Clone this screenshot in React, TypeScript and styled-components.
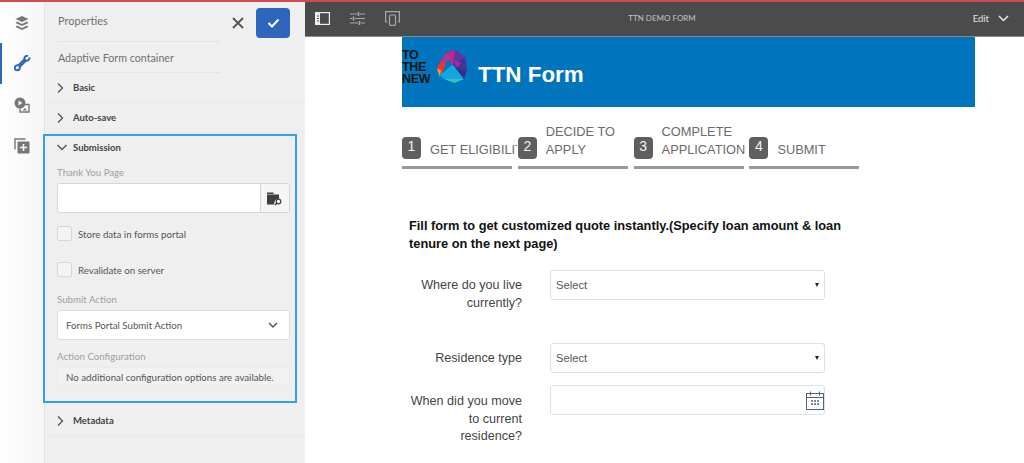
import React from 'react';
import styled, { createGlobalStyle } from 'styled-components';

const GlobalStyle = createGlobalStyle`
  html, body { margin: 0; padding: 0; height: 100%; overflow: hidden; background: #fff; }
  #root { height: 100%; }
  * { box-sizing: border-box; }
`;

const UI_FONT = `Lato, "Open Sans", sans-serif`;
const FORM_FONT = `"Liberation Sans", Arial, sans-serif`;

const steps = [
  { n: 1, label: 'GET ELIGIBILITY' },
  { n: 2, label: 'DECIDE TO APPLY' },
  { n: 3, label: 'COMPLETE APPLICATION' },
  { n: 4, label: 'SUBMIT' },
];

const LayersIcon = () => (
  <svg width="16" height="16" viewBox="0 0 16 16" fill="#777">
    <path d="M8 1l6.5 3L8 7 1.5 4z" />
    <path d="M3 6.6L8 9l5-2.4L14.5 8 8 11 1.5 8z" />
    <path d="M3 10.6L8 13l5-2.4 1.5 1.4L8 15l-6.500-3z" />
  </svg>
);

const WrenchIcon = () => (
  <svg width="17" height="17" viewBox="0 0 17 17" fill="none" stroke="#2f66bd" strokeWidth="2" strokeLinecap="round">
    <path d="M15.500 3.200c-.3 1.800-1.800 2.800-3.400 2.300L5.800 11.700c.5 1.700-.6 3.600-2.500 3.600-1.500 0-2.500-1.100-2.500-2.500 0-1.800 1.700-2.900 3.400-2.400l6.300-6.300C10 2.300 11.400.8 13.200.8" />
  </svg>
);

const AssetsIcon = () => (
  <svg width="16" height="16" viewBox="0 0 16 16">
    <circle cx="6" cy="6" r="5.500" fill="#777" />
    <path d="M4.500 3.500L8.500 6l-4 2.500z" fill="#f5f5f5" />
    <path d="M9 7.500h6v7.500H6v-3.500" fill="none" stroke="#777" strokeWidth="1.400" />
    <path d="M8.500 13.500l2.500-2.500 2 2.500z" fill="#777" />
  </svg>
);

const AddIcon = () => (
  <svg width="16" height="16" viewBox="0 0 16 16">
    <path d="M1 11.500V1h10.500" fill="none" stroke="#777" strokeWidth="1.400" />
    <rect x="3.500" y="3.500" width="12" height="12" rx="1" fill="#777" />
    <path d="M9.500 6v7M6 9.500h7" stroke="#f5f5f5" strokeWidth="1.600" />
  </svg>
);

const Chevron = ({ open }: { open?: boolean }) => (
  <svg width="10" height="10" viewBox="0 0 10 10" fill="none" stroke="#555" strokeWidth="1.300">
    <path d={open ? 'M.5 3l4.500 4.500L9.500 3' : 'M3 .5L7.500 5 3 9.500'} />
  </svg>
);

const FolderSearchIcon = () => (
  <svg width="16" height="15" viewBox="0 0 16 15">
    <path d="M0 1.500h6.500V3H0zM0 3.500h12V8a4 4 0 0 0-4.500 5.500H0z" fill="#3f3f3f" />
    <circle cx="11.500" cy="10.500" r="2.300" fill="none" stroke="#3f3f3f" strokeWidth="1.200" />
    <path d="M9.800 12.300l-1.800 1.800" stroke="#3f3f3f" strokeWidth="1.400" />
  </svg>
);

const SidePanelIcon = () => (
  <svg width="15" height="13" viewBox="0 0 15 13">
    <rect x=".6" y=".6" width="13.800" height="11.800" fill="none" stroke="#eee" strokeWidth="1.200" />
    <rect x="1" y="1" width="4" height="11" fill="#eee" />
    <path d="M2 4h2M2 6.500h2M2 9h2" stroke="#4b4b4b" />
  </svg>
);

const SlidersIcon = () => (
  <svg width="15" height="13" viewBox="0 0 15 13" stroke="#a8a8a8" strokeWidth="1.200">
    <path d="M0 2h7M10 2h5M0 6.500h2M5 6.500h10M0 11h8M11 11h4" />
    <path d="M8.500 0v4M3.500 4.500v4M9.500 9v4" strokeWidth="1.600" />
  </svg>
);

const DeviceIcon = () => (
  <svg width="15" height="15" viewBox="0 0 15 15" fill="none" stroke="#a8a8a8" strokeWidth="1.200">
    <path d="M2.500 11H.6V.6h13.800V11H13" />
    <rect x="4.500" y="4" width="6" height="10.400" rx="1" />
  </svg>
);

const CalendarIcon = () => (
  <svg width="18" height="19" viewBox="0 0 18 19" fill="none" stroke="#4d6480" strokeWidth="1">
    <rect x=".5" y="2.500" width="17" height="16" />
    <path d="M.5 6.500h17M4.500 .5v4M13.500 .5v4" />
    <path d="M5 10h2M8 10h2M11 10h2M5 13h2M8 13h2M11 13h2" strokeWidth="1.500" />
  </svg>
);

const GemLogo = () => (
  <svg width="30" height="33" viewBox="0 0 31 34">
    <path d="M9 3L19 0l5 4-8 13z" fill="#c2258c" />
    <path d="M9 3L16 9 2 14z" fill="#b0339f" />
    <path d="M2 14l8-3-5 14-5-6z" fill="#ee3338" />
    <path d="M0 19l4 2-1 7z" fill="#f7a11a" />
    <path d="M16 15l12 15-21 0-4-4z" fill="#12a8df" />
    <path d="M7 30l21 0-10 4z" fill="#2ec4c0" />
    <path d="M19 0l10 7-13 9z" fill="#5b3aa0" />
    <path d="M29 7l2 13-15-4z" fill="#4a3296" />
    <path d="M31 20l-3 10-10-13z" fill="#3b2c8c" />
    <path d="M17 9l8 5-5 4z" fill="#a32c9c" />
  </svg>
);

const App = () => {
  return (
    <>
      <GlobalStyle />
      <Page>
        <TopLine />
        <Workspace>
          <Rail>
            <RailItem><LayersIcon /></RailItem>
            <RailItem active><WrenchIcon /></RailItem>
            <RailItem><AssetsIcon /></RailItem>
            <RailItem><AddIcon /></RailItem>
          </Rail>

          <Panel>
            <PanelHeader>
              <PanelTitle>Properties</PanelTitle>
              <CloseButton>
                <svg width="12" height="12" viewBox="0 0 12 12" stroke="#555" strokeWidth="1.800">
                  <path d="M1 1l10 10M11 1L1 11" />
                </svg>
              </CloseButton>
              <ConfirmButton>
                <svg width="13" height="10" viewBox="0 0 13 10" fill="none" stroke="#fff" strokeWidth="2">
                  <path d="M1.500 5l3.500 3.500 6.500-7" />
                </svg>
              </ConfirmButton>
            </PanelHeader>
            <PanelSubtitle>Adaptive Form container</PanelSubtitle>

            <AccordionRow><Chevron /><span>Basic</span></AccordionRow>
            <AccordionRow><Chevron /><span>Auto-save</span></AccordionRow>

            <SelectedSection>
              <SectionHead><Chevron open /><span>Submission</span></SectionHead>
              <FieldLabel>Thank You Page</FieldLabel>
              <PathField>
                <PathInput />
                <PathButton><FolderSearchIcon /></PathButton>
              </PathField>
              <CheckRow><CheckBox /><span>Store data in forms portal</span></CheckRow>
              <CheckRow second><CheckBox /><span>Revalidate on server</span></CheckRow>
              <FieldLabel spaced>Submit Action</FieldLabel>
              <ActionSelect>
                <span>Forms Portal Submit Action</span>
                <svg width="10" height="7" viewBox="0 0 10 7" fill="none" stroke="#555" strokeWidth="1.500">
                  <path d="M1 1l4 4 4-4" />
                </svg>
              </ActionSelect>
              <FieldLabel config>Action Configuration</FieldLabel>
              <ConfigNote>No additional configuration options are available.</ConfigNote>
            </SelectedSection>

            <AccordionRow metadata><Chevron /><span>Metadata</span></AccordionRow>
          </Panel>

          <Main>
            <Toolbar>
              <ToolbarIcons>
                <SidePanelIcon />
                <SlidersIcon />
                <DeviceIcon />
              </ToolbarIcons>
              <ToolbarTitle>TTN DEMO FORM</ToolbarTitle>
              <EditMenu>
                <span>Edit</span>
                <svg width="11" height="7" viewBox="0 0 11 7" fill="none" stroke="#e8e8e8" strokeWidth="1.500">
                  <path d="M1 1l4.500 4.500L10 1" />
                </svg>
              </EditMenu>
            </Toolbar>

            <Canvas>
              <Banner>
                <Wordmark>TO<br />THE<br />NEW</Wordmark>
                <GemLogo />
                <BannerTitle>TTN Form</BannerTitle>
              </Banner>

              <Steps>
                {steps.map((s) => (
                  <Step key={s.n}>
                    <StepNumber>{s.n}</StepNumber>
                    <StepLabel nowrap={s.n === 1}>{s.label}</StepLabel>
                  </Step>
                ))}
              </Steps>

              <FormIntro>
                Fill form to get customized quote instantly.(Specify loan amount &amp; loan tenure on the next page)
              </FormIntro>

              <FormRow height={73}>
                <RowLabel>Where do you live currently?</RowLabel>
                <SelectBox>Select<SelectCaret /></SelectBox>
              </FormRow>
              <FormRow height={42}>
                <RowLabel>Residence type</RowLabel>
                <SelectBox>Select<SelectCaret /></SelectBox>
              </FormRow>
              <FormRow height={60}>
                <RowLabel low>When did you move to current residence?</RowLabel>
                <SelectBox><DateIcon><CalendarIcon /></DateIcon></SelectBox>
              </FormRow>
            </Canvas>
          </Main>
        </Workspace>
      </Page>
    </>
  );
};

export default App;

const Page = styled.div`
  display: flex;
  flex-direction: column;
  height: 463px;
  width: 1024px;
  overflow: hidden;
  font-family: ${UI_FONT};
`;

const TopLine = styled.div`
  flex: none;
  height: 2px;
  background: #cf4a52;
`;

const Workspace = styled.div`
  flex: 1;
  display: flex;
  min-height: 0;
`;

const Rail = styled.nav`
  flex: none;
  width: 45px;
  background: linear-gradient(90deg, #fff, #f6f6f6);
  border-right: 1px solid #e2e2e2;
`;

const RailItem = styled.div<{ active?: boolean }>`
  display: flex;
  align-items: center;
  justify-content: center;
  height: 41px;
  box-shadow: ${({ active }) => (active ? 'inset 2px 0 0 #2f66bd' : 'none')};
`;

const Panel = styled.aside`
  flex: none;
  width: 260px;
  background: #efefef;
`;

const PanelHeader = styled.div`
  display: flex;
  align-items: center;
  height: 39px;
  padding: 0 15px 0 13px;
`;

const PanelTitle = styled.div`
  width: 162px;
  height: 40px;
  line-height: 38px;
  font-size: 11px;
  color: #707070;
  border-bottom: 1px solid #e4e4e4;
`;

const CloseButton = styled.div`
  display: flex;
  width: 12px;
  margin: 2px 0 0 12px;
`;

const ConfirmButton = styled.div`
  display: flex;
  align-items: center;
  justify-content: center;
  width: 34px;
  height: 30px;
  margin: 3px 0 0 12px;
  background: #2f66bd;
  border-radius: 4px;
`;

const PanelSubtitle = styled.div`
  width: 162px;
  height: 32px;
  margin-left: 13px;
  line-height: 33px;
  font-size: 10.700px;
  color: #707070;
  border-bottom: 1px solid #e4e4e4;
`;

const AccordionRow = styled.div<{ metadata?: boolean }>`
  display: flex;
  align-items: center;
  gap: 8px;
  height: 30px;
  margin-top: ${({ metadata }) => (metadata ? '3px' : '0')};
  padding-left: 10px;
  font-size: 9.500px;
  font-weight: 700;
  color: #444;
  border-bottom: 1px solid #e8e8e8;
`;

const SelectedSection = styled.section`
  position: relative;
  width: 254px;
  height: 269px;
  margin: 1px 0 0 -2px;
  padding: 0 6px 0 12px;
  border: 2px solid #2f9ff0;
  background: #efefef;
`;

const SectionHead = styled.div`
  display: flex;
  align-items: center;
  gap: 6px;
  height: 22px;
  font-size: 9.500px;
  font-weight: 700;
  color: #444;
`;

const FieldLabel = styled.div<{ spaced?: boolean; config?: boolean }>`
  height: 14px;
  margin-top: ${({ spaced, config }) => (spaced ? '15px' : config ? '9px' : '7px')};
  margin-bottom: 4px;
  line-height: 14px;
  font-size: 9.700px;
  color: #a0a0a0;
`;

const PathField = styled.div`
  display: flex;
  width: 233px;
  height: 30px;
  border: 1px solid #d6d6d6;
  border-radius: 3px;
  overflow: hidden;
`;

const PathInput = styled.div`
  flex: 1;
  background: #fff;
`;

const PathButton = styled.div`
  display: flex;
  align-items: center;
  justify-content: center;
  width: 29px;
  background: #f5f5f5;
  border-left: 1px solid #d6d6d6;
`;

const CheckRow = styled.div<{ second?: boolean }>`
  display: flex;
  align-items: center;
  gap: 6px;
  height: 15px;
  margin-top: ${({ second }) => (second ? '21px' : '13px')};
  font-size: 9.700px;
  color: #555;
`;

const CheckBox = styled.div`
  width: 15px;
  height: 15px;
  background: #f4f4f4;
  border: 1px solid #d6d6d6;
  border-radius: 2px;
`;

const ActionSelect = styled.div`
  display: flex;
  align-items: center;
  justify-content: space-between;
  width: 233px;
  height: 30px;
  padding: 0 11px 0 8px;
  background: #fff;
  border: 1px solid #dcdcdc;
  border-radius: 3px;
  font-size: 9.700px;
  color: #555;
`;

const ConfigNote = styled.div`
  width: 233px;
  height: 19px;
  padding-left: 8px;
  line-height: 18px;
  font-size: 9.700px;
  white-space: nowrap;
  color: #555;
  background: #f1f1f1;
  border: 1px solid #ebebeb;
  border-radius: 2px;
`;

const Main = styled.main`
  flex: 1;
  min-width: 0;
  display: flex;
  flex-direction: column;
`;

const Toolbar = styled.header`
  flex: none;
  display: grid;
  grid-template-columns: 1fr auto 1fr;
  align-items: center;
  height: 35px;
  padding: 0 15px 2px 10px;
  background: #4b4b4b;
  border-bottom: 1px solid #8a8a8a;
`;

const ToolbarIcons = styled.div`
  display: flex;
  align-items: center;
  gap: 20px;
`;

const ToolbarTitle = styled.div`
  font-size: 8px;
  color: #c4c4c4;
`;

const EditMenu = styled.div`
  display: flex;
  align-items: center;
  justify-content: flex-end;
  gap: 9px;
  font-size: 9.500px;
  color: #e4e4e4;
`;

const Canvas = styled.div`
  flex: 1;
  min-height: 0;
  padding-left: 97px;
  background: #fff;
  overflow: hidden;
  font-family: ${FORM_FONT};
`;

const Banner = styled.div`
  display: flex;
  align-items: center;
  width: 573px;
  height: 70px;
  padding-bottom: 11px;
  background: #0074bd;
`;

const Wordmark = styled.div`
  width: 35px;
  font-size: 12.500px;
  line-height: 12px;
  font-weight: 700;
  letter-spacing: -.3px;
  color: #161616;
`;

const BannerTitle = styled.h1`
  margin: 17px 0 0 11px;
  font-size: 22.400px;
  font-weight: 700;
  color: #fff;
`;

const Steps = styled.div`
  display: flex;
  gap: 5.800px;
  width: 464px;
  height: 62px;
`;

const Step = styled.div`
  position: relative;
  display: flex;
  align-items: flex-end;
  flex: none;
  width: 110px;
  height: 62px;
  padding-bottom: 7px;
  border-bottom: 3px solid #9a9a9a;
`;

const StepNumber = styled.div`
  flex: none;
  width: 19px;
  height: 22px;
  line-height: 19px;
  text-align: center;
  font-size: 14px;
  color: #f2f2f2;
  background: #5f5f5f;
  border-radius: 4px;
`;

const StepLabel = styled.div<{ nowrap?: boolean }>`
  flex: none;
  width: ${({ nowrap }) => (nowrap ? '87px' : '96px')};
  margin-left: 9px;
  overflow: ${({ nowrap }) => (nowrap ? 'hidden' : 'visible')};
  white-space: ${({ nowrap }) => (nowrap ? 'nowrap' : 'normal')};
  font-size: 12.800px;
  line-height: 18px;
  color: #6b6b6b;
`;

const FormIntro = styled.p`
  width: 440px;
  margin: 48px 0 17px 7px;
  font-size: 12.800px;
  line-height: 18px;
  font-weight: 700;
  color: #111;
`;

const FormRow = styled.div<{ height: number }>`
  display: flex;
  align-items: flex-start;
  gap: 28px;
  height: ${({ height }) => height}px;
`;

const RowLabel = styled.div<{ low?: boolean }>`
  flex: none;
  width: 114px;
  margin-left: 6px;
  padding-top: ${({ low }) => (low ? '8px' : '7px')};
  text-align: right;
  font-size: 12.600px;
  line-height: 17.500px;
  color: #444;
`;

const SelectBox = styled.div`
  position: relative;
  flex: none;
  display: flex;
  align-items: center;
  width: 275px;
  height: 30px;
  padding-left: 5px;
  font-size: 11.200px;
  color: #555;
  background: #fff;
  border: 1px solid #d3e3f0;
  border-radius: 3px;
`;

const SelectCaret = styled.span`
  position: absolute;
  top: 12px;
  right: 5px;
  border-left: 2.500px solid transparent;
  border-right: 2.500px solid transparent;
  border-top: 4px solid #222;
`;

const DateIcon = styled.span`
  position: absolute;
  top: 5px;
  right: 0;
  display: flex;
`;
